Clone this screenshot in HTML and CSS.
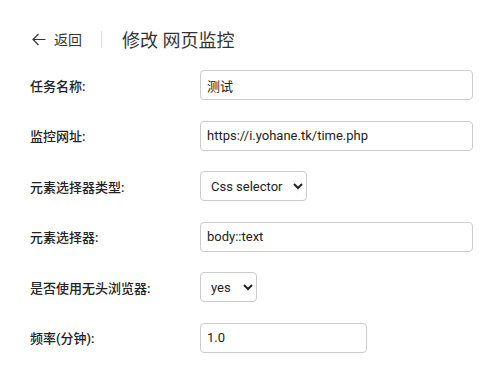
FILE: index.html
```html
<!DOCTYPE html>
<html lang="zh">
<head>
<meta charset="utf-8">
<link rel="stylesheet" href="styles.css">
</head>
<body>
<div class="page">
  <header class="header">
    <a class="back" href="#">
      <svg class="arrow" width="14" height="13" viewBox="0 0 14 13"><path d="M6.5 1 L1 6.5 L6.5 12 M1 6.5 H13.5" fill="none" stroke="#333" stroke-width="1.2"/></svg>
      <span>返回</span>
    </a>
    <span class="divider"></span>
    <h1 class="title">修改 网页监控</h1>
  </header>
  <form class="form">
    <div class="row">
      <label class="label">任务名称:</label>
      <input class="input wide" type="text" value="测试">
    </div>
    <div class="row">
      <label class="label">监控网址:</label>
      <input class="input wide" type="text" value="https://i.yohane.tk/time.php">
    </div>
    <div class="row">
      <label class="label">元素选择器类型:</label>
      <select class="select sel-type"><option>Css selector</option></select>
    </div>
    <div class="row">
      <label class="label">元素选择器:</label>
      <input class="input wide" type="text" value="body::text">
    </div>
    <div class="row">
      <label class="label">是否使用无头浏览器:</label>
      <select class="select sel-yes"><option>yes</option></select>
    </div>
    <div class="row">
      <label class="label">频率(分钟):</label>
      <input class="input narrow" type="text" value="1.0">
    </div>
  </form>
</div>
</body>
</html>
```
FILE: styles.css
```css
* { box-sizing: border-box; }
html, body { margin: 0; padding: 0; background: #fff; }
body {
  font-family: Roboto, "Noto Sans CJK SC", sans-serif;
  color: #222;
}
.page { padding: 28px 0 0 32px; }
.header {
  display: flex;
  align-items: center;
  height: 22px;
}
.back {
  display: flex;
  align-items: center;
  gap: 8px;
  color: #333;
  text-decoration: none;
  font-size: 14px;
}
.arrow { display: block; }
.divider {
  width: 1px;
  height: 17px;
  background: #ddd;
  margin: 0 20px 0 19px;
}
.title {
  margin: 0;
  font-size: 18px;
  font-weight: 400;
  color: #333;
}
.form { margin-top: 20px; margin-left: -2px; }
.row {
  display: flex;
  align-items: center;
  height: 30px;
  margin-bottom: 20.5px;
}
.label {
  width: 170px;
  font-size: 13px;
  font-weight: 500;
  color: #222;
}
.input, .select {
  height: 30px;
  border: 1px solid #ccc;
  border-radius: 4px;
  font-family: Roboto, "Noto Sans CJK SC", sans-serif;
  font-size: 13px;
  color: #222;
  background: #fff;
}
.input { padding: 0 6px; }
.wide { width: 273px; }
.narrow { width: 167px; }
.select { padding: 0 4px 0 6px; }
.sel-type { width: 107px; }
.sel-yes { width: 57px; }
```
